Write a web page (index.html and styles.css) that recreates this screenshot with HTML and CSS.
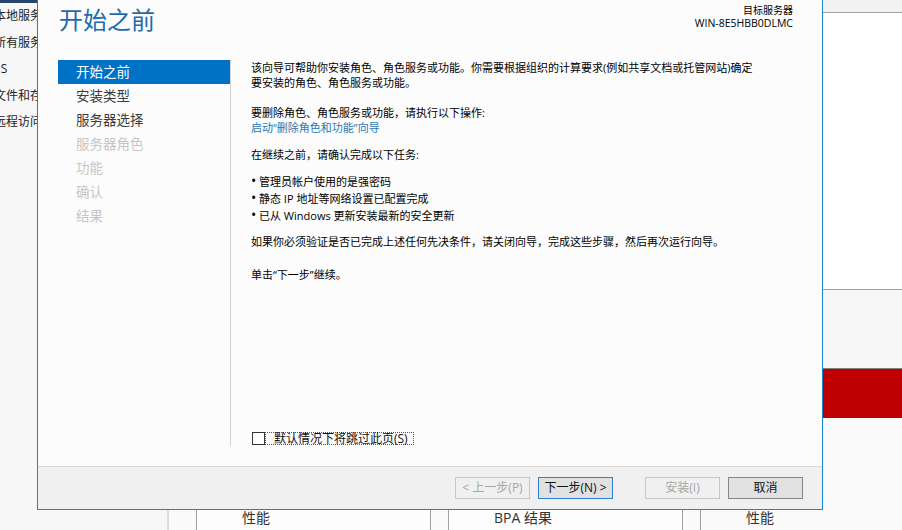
FILE: index.html
```html
<!DOCTYPE html>
<html lang="zh-CN">
<head>
    <meta charset="UTF-8">
    <title>添加角色和功能向导</title>
    <link rel="stylesheet" href="styles.css">
</head>
<body>
    <div class="desk">
        <aside class="sm-nav">
            <div class="sm-nav-active"></div>
            <ul class="sm-nav-list">
                <li>本地服务器</li>
                <li>所有服务器</li>
                <li>IIS</li>
                <li>文件和存储服务</li>
                <li>远程访问</li>
            </ul>
        </aside>
        <main class="sm-main">
            <div class="tile">
                <div class="tile-fill"></div>
                <div class="tile-row">性能</div>
            </div>
            <div class="tile">
                <div class="tile-fill"></div>
                <div class="tile-row">BPA 结果</div>
            </div>
            <div class="tile tile-last">
                <div class="tile-head"></div>
                <div class="tile-body"></div>
                <div class="tile-grey"></div>
                <div class="tile-alert"></div>
                <div class="tile-fill"></div>
                <div class="tile-row">性能</div>
            </div>
        </main>
    </div>

    <div class="wizard">
        <header class="wizard-header">
            <h1 class="wizard-title">开始之前</h1>
            <div class="target">
                <div class="target-label">目标服务器</div>
                <div class="target-name">WIN-8E5HBB0DLMC</div>
            </div>
        </header>

        <div class="wizard-body">
            <ul class="steps">
                <li class="step active">开始之前</li>
                <li class="step">安装类型</li>
                <li class="step">服务器选择</li>
                <li class="step disabled">服务器角色</li>
                <li class="step disabled">功能</li>
                <li class="step disabled">确认</li>
                <li class="step disabled">结果</li>
            </ul>

            <div class="content">
                <p class="p-intro">该向导可帮助你安装角色、角色服务或功能。你需要根据组织的计算要求(例如共享文档或托管网站)确定要安装的角色、角色服务或功能。</p>
                <p class="p-remove">要删除角色、角色服务或功能，请执行以下操作:<br><a href="#" class="link">启动“删除角色和功能”向导</a></p>
                <p class="p-before">在继续之前，请确认完成以下任务:</p>
                <ul class="tasks">
                    <li>管理员帐户使用的是强密码</li>
                    <li>静态 IP 地址等网络设置已配置完成</li>
                    <li>已从 Windows 更新安装最新的安全更新</li>
                </ul>
                <p class="p-verify">如果你必须验证是否已完成上述任何先决条件，请关闭向导，完成这些步骤，然后再次运行向导。</p>
                <p class="p-next">单击“下一步”继续。</p>

                <div class="skip">
                    <span class="checkbox"></span>
                    <span class="skip-label">默认情况下将跳过此页(S)</span>
                </div>
            </div>
        </div>

        <footer class="wizard-footer">
            <button class="btn" disabled>&lt; 上一步(P)</button>
            <button class="btn btn-default">下一步(N) &gt;</button>
            <button class="btn btn-install" disabled>安装(I)</button>
            <button class="btn btn-cancel">取消</button>
        </footer>
    </div>
</body>
</html>
```

FILE: styles.css
```css
body {
    margin: 0;
    padding: 0;
    width: 902px;
    height: 530px;
    overflow: hidden;
    position: relative;
    font-family: "Open Sans", "Noto Sans CJK SC", sans-serif;
    color: #000;
    background-color: #fafafa;
}

/* server manager behind the wizard */
.desk {
    display: flex;
    height: 530px;
}
.sm-nav {
    width: 167px;
    background-color: #f7f7f7;
    border-right: 2px solid #dcdcdc;
}
.sm-nav-active {
    height: 3px;
    background-color: #26466e;
}
.sm-nav-list {
    list-style: none;
    margin: 0;
    padding: 0;
    font-size: 12px;
}
.sm-nav-list li {
    height: 26.5px;
    line-height: 26.5px;
    text-indent: -6px;
    color: #222;
    white-space: nowrap;
}
.sm-main {
    flex: 1;
    display: flex;
    gap: 17px;
    padding-left: 27px;
    overflow: hidden;
}
.tile {
    flex: 0 0 235px;
    box-sizing: border-box;
    display: flex;
    flex-direction: column;
    border-left: 1px solid #a0a0a0;
    border-right: 1px solid #a0a0a0;
    background-color: #fdfdfd;
}
.tile-last {
    background-color: #fafafa;
}
.tile-head {
    height: 12px;
    background-color: #f2f2f2;
    border-bottom: 1px solid #a0a0a0;
}
.tile-body {
    height: 276px;
    background-color: #ffffff;
    border-bottom: 1px solid #a0a0a0;
}
.tile-grey {
    height: 78px;
    background-color: #f6f6f6;
    border-bottom: 1px solid #808080;
}
.tile-alert {
    height: 49px;
    background-color: #bf0000;
}
.tile-fill {
    flex: 1;
}
.tile-row {
    height: 21px;
    line-height: 17px;
    padding-left: 45px;
    font-size: 14px;
    color: #333;
}

/* wizard dialog */
.wizard {
    position: absolute;
    left: 37px;
    top: 0;
    width: 786px;
    height: 510px;
    box-sizing: border-box;
    border: 1px solid #1883d7;
    border-top: none;
    background-color: #fcfcfc;
    display: flex;
    flex-direction: column;
}
.wizard-header {
    height: 60px;
    display: flex;
    justify-content: space-between;
    padding: 0 29px 0 21px;
}
.wizard-title {
    margin: 0;
    padding-top: 6px;
    font-size: 24px;
    line-height: 28px;
    font-weight: normal;
    color: #1f6bab;
}
.target {
    padding-top: 4px;
    text-align: right;
    color: #000;
}
.target-label {
    font-size: 10px;
    line-height: 13px;
}
.target-name {
    font-size: 10.5px;
    line-height: 12px;
}
.wizard-body {
    flex: 1;
    display: flex;
    margin-bottom: 20px;
}
.steps {
    list-style: none;
    margin: 0 0 0 20px;
    padding: 0;
    width: 173px;
    box-sizing: border-box;
    border-right: 1px solid #cfcfcf;
}
.step {
    height: 24px;
    line-height: 24px;
    padding-left: 18px;
    font-size: 13.5px;
    color: #3c3c3c;
}
.step.active {
    background-color: #0072c6;
    color: #ffffff;
}
.step.disabled {
    color: #c6c6c6;
}
.content {
    flex: 1;
    display: flex;
    flex-direction: column;
    padding-left: 20px;
    font-size: 11px;
    line-height: 15px;
}
.content p {
    margin: 0;
}
.p-intro {
    width: 508px;
}
.p-remove {
    margin-top: 15px !important;
}
.p-before {
    margin-top: 12px !important;
}
.link {
    color: #2b78b6;
    text-decoration: none;
}
.tasks {
    list-style: none;
    margin: 11px 0 0 0;
    padding: 0;
}
.tasks li {
    line-height: 17px;
}
.tasks li::before {
    content: "•";
    display: inline-block;
    width: 8px;
    font-size: 14px;
    line-height: 10px;
}
.p-verify {
    margin-top: 10px !important;
}
.p-next {
    margin-top: 18px !important;
}
.skip {
    margin-top: auto;
    margin-bottom: 1px;
    display: flex;
    align-items: center;
}
.checkbox {
    width: 13px;
    height: 13px;
    box-sizing: border-box;
    border: 1px solid #333;
    background-color: #ffffff;
    margin-left: 1px;
}
.skip-label {
    font-size: 12px;
    line-height: 11px;
    padding: 0 5px 0 8px;
    border: 1px dotted #555;
    color: #111;
}
.wizard-footer {
    height: 43px;
    box-sizing: border-box;
    border-top: 1px solid #dadada;
    background-color: #f0f0f0;
    display: flex;
    justify-content: flex-end;
    align-items: flex-start;
    padding: 10px 19px 0 0;
    gap: 8px;
}
.btn {
    width: 75px;
    height: 22px;
    box-sizing: border-box;
    padding: 0;
    font-family: "Open Sans", "Noto Sans CJK SC", sans-serif;
    font-size: 12px;
    line-height: 20px;
    background-color: #e1e1e1;
    border: 1px solid #adadad;
    color: #111;
}
.btn:disabled {
    background-color: #f0f0f0;
    border-color: #c6c6c6;
    color: #a6a6a6;
}
.btn-default {
    border-color: #2e7fd0;
}
.btn-install {
    margin-left: 24px;
}
.btn-cancel {
    border-color: #868686;
}
```
